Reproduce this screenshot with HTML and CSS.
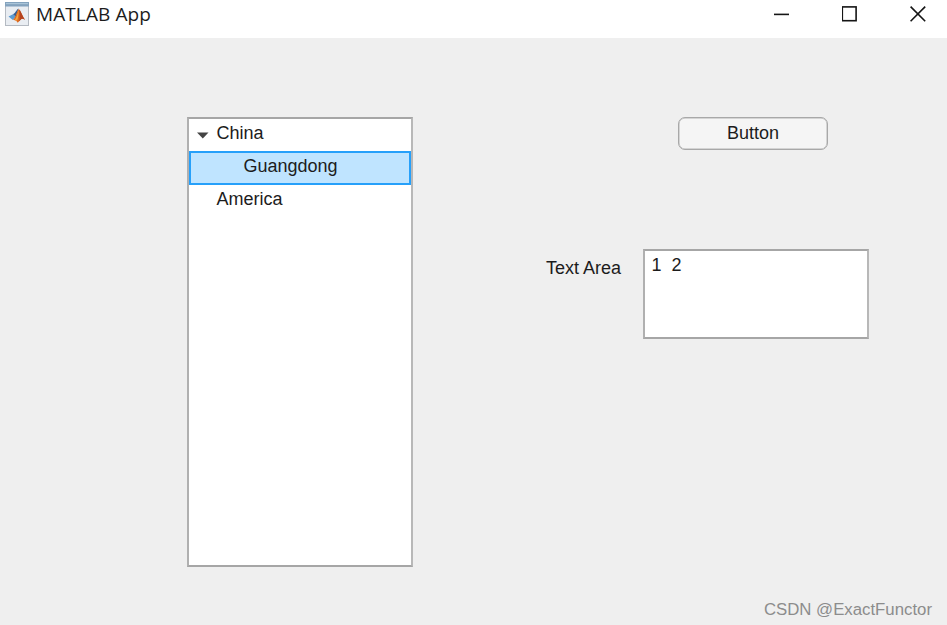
FILE: index.html
```html
<!DOCTYPE html>
<html lang="en">
<head>
<meta charset="utf-8">
<title>MATLAB App</title>
<link rel="stylesheet" href="styles.css">
</head>
<body>
<header class="titlebar">
  <svg class="logo" width="24" height="24" viewBox="0 0 24 24">
    <rect x=".5" y=".5" width="23" height="23" fill="#e9edf2" stroke="#b4bac2"/>
    <rect x="0" y="0" width="24" height="4.5" fill="#83a2bd"/>
    <rect x="1" y="1" width="22" height="1.2" fill="#a9c4d8"/>
    <path d="M3.5 14.5 8 12.2l2.800 2.600-3 3.200z" fill="#5b9bd0"/>
    <path d="M8 12.200c2.200-.5 3.300-4.400 5.600-5.600L10.800 14.800z" fill="#345d91"/>
    <path d="M7.800 18c2.500-1.500 4-8.500 5.900-11.100 1.800 1.300 4 8 6.300 10.800-2.300-1.100-3.300-1.200-4.400.1L12.700 20.700c-1.200-2.300-2.600-3-4.900-2.700z" fill="#dc6a20"/>
    <path d="M14.300 7.500c.6 4.100.4 9-.1 11.700l1.400-1.400c1.100-1.300 2.100-1.200 4.400-.1-2.100-2.600-4-8.500-5.700-10.200z" fill="#b5431f"/>
    <path d="M13.500 8c-.6 3-1.700 7.500-3.700 10l2.200.8c1.300-2.800 1.700-7 1.500-10.800z" fill="#f5a640"/>
  </svg>
  <h1 class="title">MATLAB App</h1>
  <svg class="control" width="16" height="16" viewBox="0 0 16 16"><path d="M0 8.400h15" /></svg>
  <svg class="control" width="16" height="16" viewBox="0 0 16 16"><rect x=".3" y=".9" width="13.800" height="13.800"/></svg>
  <svg class="control" width="16" height="16" viewBox="0 0 16 16"><path d="M.6.6l14.600 14.600M15.200.6.6 15.200"/></svg>
</header>
<main class="canvas">
  <ul class="tree">
    <li class="node parent"><svg class="arrow" width="12" height="7" viewBox="0 0 12 7"><path d="M0 .5h11.500L5.800 6.500z"/></svg>China</li>
    <li class="node child selected">Guangdong</li>
    <li class="node">America</li>
  </ul>
  <section class="controls">
    <button class="push">Button</button>
    <div class="field">
      <span class="label">Text Area</span>
      <div class="area">1&nbsp; 2</div>
    </div>
    <p class="watermark">CSDN @ExactFunctor</p>
  </section>
</main>
</body>
</html>
```
FILE: styles.css
```css
* { box-sizing: border-box; }
body {
  margin: 0;
  height: 625px;
  overflow: hidden;
  display: flex;
  flex-direction: column;
  background: #efefef;
  color: #1c1c1c;
  font: 18px/32px "Liberation Sans", Arial, sans-serif;
}
.titlebar {
  height: 38px;
  flex: none;
  display: flex;
  align-items: flex-start;
  padding: 2px 21px 0 5px;
  background: #fff;
}
.logo { flex: none; }
.title {
  margin: 0 auto 0 7px;
  font: 400 19px/24px "Open Sans", "Noto Sans", sans-serif;
  letter-spacing: .1px;
}
.control {
  margin: 4px 0 0 52px;
  fill: none;
  stroke: #151515;
  stroke-width: 1.6;
}
.canvas {
  flex: 1;
  display: flex;
  padding: 79px 0 0 187px;
}
.tree {
  width: 226px;
  height: 450px;
  flex: none;
  margin: 0;
  padding: 0;
  list-style: none;
  background: #fff;
  border: 2px solid;
  border-color: #a6a6a6 #b8b8b8 #a6a6a6 #b0b0b0;
}
.node {
  height: 33px;
  padding-left: 27.5px;
  line-height: 28px;
}
.node.parent {
  display: flex;
  align-items: flex-start;
  padding-left: 8px;
  height: 32px;
}
.arrow { margin: 13px 7.500px 0 0; fill: #444; }
.node.child { padding-left: 52.500px; }
.node.selected {
  background: #bfe4ff;
  border: 2px solid #26a0fa;
  height: 34px;
  line-height: 27px;
}
.controls {
  flex: 1;
  display: flex;
  flex-direction: column;
  padding-left: 133px;
}
.push {
  width: 150px;
  height: 33px;
  margin-left: 132px;
  padding: 0;
  font: inherit;
  line-height: 27px;
  color: inherit;
  background: #f5f5f5;
  border: 1px solid #a8a8a8;
  box-shadow: inset 0 0 0 .5px #b4b4b4;
  border-radius: 7px;
}
.field {
  display: flex;
  margin-top: 99px;
}
.label {
  width: 97px;
  padding-top: 3px;
}
.area {
  width: 226px;
  height: 90px;
  padding: 0 6.500px;
  line-height: 29px;
  background: #fff;
  border: 2px solid;
  border-color: #a6a6a6 #b8b8b8 #a6a6a6 #b0b0b0;
}
.watermark {
  margin: auto 15px 2px auto;
  font: 16.800px/26px "Liberation Sans", Arial, sans-serif;
  color: #8c8c8c;
}
```
